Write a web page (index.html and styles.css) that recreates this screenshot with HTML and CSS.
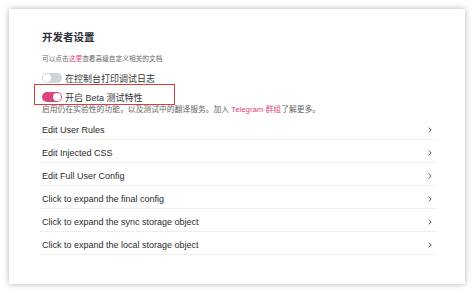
FILE: index.html
```
<!DOCTYPE html>
<html lang="zh">
<head>
<meta charset="utf-8">
<link rel="stylesheet" href="styles.css">
</head>
<body>
<div class="card">
  <h2 class="title">开发者设置</h2>
  <p class="hint">可以点击<a class="link">这里</a>查看高级自定义相关的文档</p>
  <div class="toggle-row first">
    <span class="switch"><span class="knob"></span></span>
    <span class="label">在控制台打印调试日志</span>
  </div>
  <div class="toggle-row beta">
    <span class="switch on"><span class="knob"></span></span>
    <span class="label">开启 Beta 测试特性</span>
  </div>
  <p class="desc">启用仍在实验性的功能，以及测试中的翻译服务。加入 <a class="link">Telegram 群组</a>了解更多。</p>
  <ul class="list">
    <li><span>Edit User Rules</span><svg class="chev" width="4" height="6" viewBox="0 0 4 6"><path d="M0.8 0.6 L3.2 3 L0.8 5.4" fill="none" stroke="#555" stroke-width="1"/></svg></li>
    <li><span>Edit Injected CSS</span><svg class="chev" width="4" height="6" viewBox="0 0 4 6"><path d="M0.8 0.6 L3.2 3 L0.8 5.4" fill="none" stroke="#555" stroke-width="1"/></svg></li>
    <li><span>Edit Full User Config</span><svg class="chev" width="4" height="6" viewBox="0 0 4 6"><path d="M0.8 0.6 L3.2 3 L0.8 5.4" fill="none" stroke="#555" stroke-width="1"/></svg></li>
    <li><span>Click to expand the final config</span><svg class="chev" width="4" height="6" viewBox="0 0 4 6"><path d="M0.8 0.6 L3.2 3 L0.8 5.4" fill="none" stroke="#555" stroke-width="1"/></svg></li>
    <li><span>Click to expand the sync storage object</span><svg class="chev" width="4" height="6" viewBox="0 0 4 6"><path d="M0.8 0.6 L3.2 3 L0.8 5.4" fill="none" stroke="#555" stroke-width="1"/></svg></li>
    <li><span>Click to expand the local storage object</span><svg class="chev" width="4" height="6" viewBox="0 0 4 6"><path d="M0.8 0.6 L3.2 3 L0.8 5.4" fill="none" stroke="#555" stroke-width="1"/></svg></li>
  </ul>
</div>
</body>
</html>
```
FILE: styles.css
```
html, body {
  margin: 0;
  padding: 0;
  background: #ffffff;
}
body {
  padding: 9px;
  font-family: "Liberation Sans", "Noto Sans CJK SC", sans-serif;
  color: #333;
}
.card {
  background: #fff;
  height: 275px;
  box-sizing: border-box;
  padding: 21px 28px 0 33px;
  box-shadow: 0 0 6px rgba(0,0,0,0.3);
}
.title {
  margin: 0;
  font-size: 10.5px;
  line-height: 14px;
  font-weight: 700;
  color: #2e3038;
  font-family: "Noto Sans CJK SC", sans-serif;
}
.hint {
  margin: 10px 0 0 0;
  font-size: 6.7px;
  line-height: 10px;
  color: #666;
  font-family: "Liberation Sans", "Noto Sans CJK SC", sans-serif;
}
.link {
  color: #e0487c;
}
.toggle-row {
  display: flex;
  align-items: center;
  gap: 3px;
  height: 12px;
  font-size: 9px;
  color: #333;
  font-family: "Liberation Sans", "Noto Sans CJK SC", sans-serif;
}
.toggle-row.first {
  margin-top: 8px;
}
.toggle-row.beta {
  position: relative;
  margin-top: 7px;
}
.toggle-row.beta::after {
  content: "";
  position: absolute;
  left: -8px;
  top: -7px;
  width: 141px;
  height: 21px;
  box-sizing: border-box;
  border: 1.5px solid #d8413a;
}
.switch {
  width: 20px;
  height: 10px;
  border-radius: 5px;
  background: #cfd4dc;
  position: relative;
  flex: none;
}
.switch .knob {
  position: absolute;
  top: 1px;
  left: 1px;
  width: 8px;
  height: 8px;
  border-radius: 50%;
  background: #fff;
}
.switch.on {
  background: #d8467b;
}
.switch.on .knob {
  left: 11px;
}
.desc {
  margin: 2px 0 0 0;
  font-size: 7.8px;
  line-height: 10px;
  color: #666;
  font-family: "Liberation Sans", "Noto Sans CJK SC", sans-serif;
}
.list {
  list-style: none;
  margin: 2px 0 0 -2px;
  padding: 0;
  width: 397px;
}
.list li {
  display: flex;
  justify-content: space-between;
  align-items: center;
  box-sizing: border-box;
  height: 23px;
  padding: 4px 5px 0 2px;
  border-bottom: 1px solid #efefef;
  font-size: 9px;
  color: #2a2a2a;
  font-family: "Liberation Sans", sans-serif;
}
.chev {
  flex: none;
}
```
